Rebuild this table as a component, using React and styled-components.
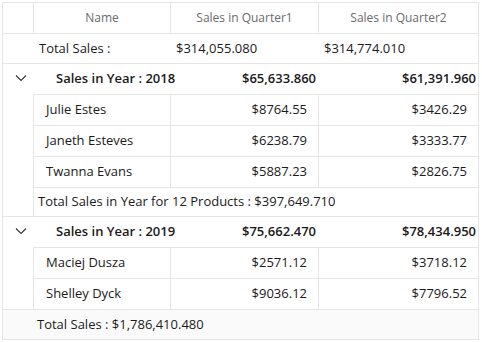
import React from "react";
import styled, { createGlobalStyle } from "styled-components";

const GlobalStyle = createGlobalStyle`
  body {
    margin: 0;
    background: #ffffff;
    font-family: "Open Sans", "Noto Sans", sans-serif;
    color: #1a1a1a;
  }
`;

const groups = [
  {
    year: 2018,
    q1: "$65,633.860",
    q2: "$61,391.960",
    rows: [
      ["Julie Estes", "$8764.55", "$3426.29"],
      ["Janeth Esteves", "$6238.79", "$3333.77"],
      ["Twanna Evans", "$5887.23", "$2826.75"],
    ],
    summary: "Total Sales in Year for 12 Products : $397,649.710",
  },
  {
    year: 2019,
    q1: "$75,662.470",
    q2: "$78,434.950",
    rows: [
      ["Maciej Dusza", "$2571.12", "$3718.12"],
      ["Shelley Dyck", "$9036.12", "$7796.52"],
    ],
  },
];

const Chevron = () => (
  <svg width="12" height="8" viewBox="0 0 12 8">
    <path d="M1 1.5 L6 6.5 L11 1.5" fill="none" stroke="#333" strokeWidth="1.1" />
  </svg>
);

const App = () => (
  <>
    <GlobalStyle />
    <Grid>
      <HeaderRow>
        <Indent />
        <HeadCell $w="137px">Name</HeadCell>
        <HeadCell $w="148px">Sales in Quarter1</HeadCell>
        <HeadCell>Sales in Quarter2</HeadCell>
      </HeaderRow>

      <TableSummary>
        <SummaryText $w="167px" $pad="36px">Total Sales :</SummaryText>
        <SummaryText $w="148px">$314,055.080</SummaryText>
        <SummaryText>$314,774.010</SummaryText>
      </TableSummary>

      {groups.map((g) => (
        <React.Fragment key={g.year}>
          <CaptionRow>
            <Indent $chevron>
              <Chevron />
            </Indent>
            <CaptionTitle>Sales in Year : {g.year}</CaptionTitle>
            <CaptionValue $w="148px">{g.q1}</CaptionValue>
            <CaptionValue>{g.q2}</CaptionValue>
          </CaptionRow>
          {g.rows.map((r) => (
            <DataRow key={r[0]}>
              <Indent />
              <NameCell>{r[0]}</NameCell>
              <NumCell $w="148px">{r[1]}</NumCell>
              <NumCell>{r[2]}</NumCell>
            </DataRow>
          ))}
          {g.summary && (
            <SummaryRow>
              <Indent />
              <GroupSummary>{g.summary}</GroupSummary>
            </SummaryRow>
          )}
        </React.Fragment>
      ))}

      <BottomSummary>Total Sales : $1,786,410.480</BottomSummary>
    </Grid>
  </>
);

const Grid = styled.div`
  box-sizing: border-box;
  width: 477px;
  margin: 2px 0 0 2px;
  border: 1px solid #e6e6e6;
  font-size: 13px;
`;

const Row = styled.div`
  display: flex;
  box-sizing: border-box;
  height: 30px;
`;

const HeaderRow = styled(Row)`
  height: 31px;
  border-bottom: 1px solid #e6e6e6;
`;

const Indent = styled.div`
  width: 30px;
  flex: none;
  display: flex;
  align-items: center;
  justify-content: center;
  padding-left: ${(p) => (p.$chevron ? "5px" : "0")};
  box-sizing: border-box;
`;

const HeadCell = styled.div`
  box-sizing: border-box;
  width: ${(p) => p.$w || "auto"};
  flex: ${(p) => (p.$w ? "none" : "1")};
  border-left: 1px solid #e6e6e6;
  display: flex;
  align-items: center;
  justify-content: center;
  padding-bottom: 2px;
  font-size: 12px;
  color: #6b6b6b;
`;

const TableSummary = styled(Row)`
  border-bottom: 1px solid #e6e6e6;
  align-items: center;
  padding-bottom: 2px;
`;

const SummaryText = styled.div`
  box-sizing: border-box;
  width: ${(p) => p.$w || "auto"};
  flex: ${(p) => (p.$w ? "none" : "1")};
  padding-left: ${(p) => p.$pad || "6px"};
  white-space: nowrap;
`;

const CaptionRow = styled(Row)`
  align-items: center;
  padding-bottom: 3px;
  font-weight: 600;
`;

const CaptionTitle = styled.div`
  width: 137px;
  flex: none;
  padding-left: 23px;
  box-sizing: border-box;
  white-space: nowrap;
`;

const CaptionValue = styled.div`
  box-sizing: border-box;
  width: ${(p) => p.$w || "auto"};
  flex: ${(p) => (p.$w ? "none" : "1")};
  text-align: right;
  padding-right: 2px;
`;

const DataRow = styled(Row)`
  height: 31px;
`;

const SummaryRow = styled(Row)`
  border-bottom: 1px solid #e6e6e6;
`;

const Cell = styled.div`
  box-sizing: border-box;
  border-left: 1px solid #e6e6e6;
  border-top: 1px solid #e6e6e6;
  display: flex;
  align-items: center;
  padding-bottom: 3px;
  white-space: nowrap;
`;

const NameCell = styled(Cell)`
  width: 137px;
  flex: none;
  padding-left: 12px;
`;

const NumCell = styled(Cell)`
  width: ${(p) => p.$w || "auto"};
  flex: ${(p) => (p.$w ? "none" : "1")};
  justify-content: flex-end;
  padding-right: 11px;
`;

const GroupSummary = styled(Cell)`
  flex: 1;
  padding-left: 4px;
`;

const BottomSummary = styled(Row)`
  align-items: center;
  padding-left: 34px;
  padding-bottom: 2px;
  background: #fafafa;
  border-top: 1px solid #e6e6e6;
`;

export default App;
